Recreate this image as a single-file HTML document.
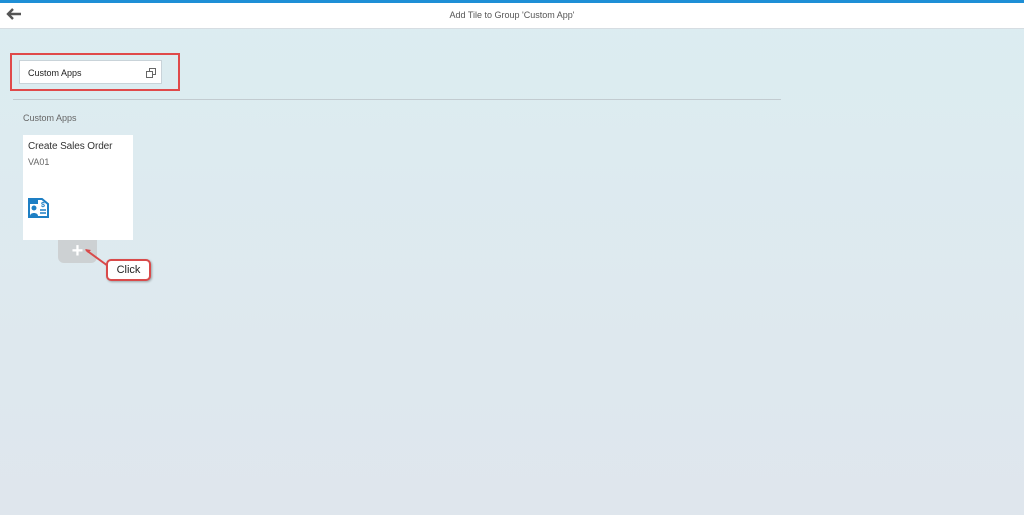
<!DOCTYPE html>
<html><head><style>
body{margin:0;width:1024px;height:515px;overflow:hidden;font-family:"Liberation Sans",sans-serif;background:linear-gradient(#dcedf1,#dfe6ed);position:relative}
.top{position:absolute;left:0;top:0;width:1024px;height:3px;background:#1e8fd6}
.hdr{position:absolute;left:0;top:3px;width:1024px;height:25px;background:#fff;border-bottom:1px solid #d6dde2}
.title{position:absolute;width:1024px;text-align:center;font-size:9px;color:#555}
.red{position:absolute;left:10px;top:53px;width:170px;height:38px;border:2px solid #e04a4a;box-sizing:border-box}
.inp{position:absolute;left:19px;top:60px;width:143px;height:24px;background:#fff;border:1px solid #c9d3d9;box-sizing:border-box;font-size:9px;color:#222;padding:7px 0 0 8px}
.line{position:absolute;left:13px;top:99px;width:768px;height:1px;background:#c2cbd0}
.lbl{position:absolute;left:23px;top:113px;font-size:9px;color:#666}
.tile{position:absolute;left:23px;top:135px;width:110px;height:105px;background:#fff}
.plus{position:absolute;left:58px;top:240px;width:39px;height:23px;background:#cdd1d3;border-radius:0 0 6px 6px;color:#fff;font-size:20px;text-align:center;line-height:23px;font-weight:bold}
.click{position:absolute;left:106px;top:259px;width:45px;height:22px;background:#fff;border:2px solid #d94a4a;border-radius:5px;box-sizing:border-box;font-size:11px;text-align:center;line-height:18px;color:#222;box-shadow:1px 1px 2px rgba(0,0,0,.3)}
</style></head><body>
<div class="top"></div>
<div class="hdr"><svg style="position:absolute;left:6px;top:5px" width="16" height="12" viewBox="0 0 16 12"><path d="M7 1L2 6l5 5M2 6h13" stroke="#555" stroke-width="2.4" fill="none"/></svg><div class="title" style="top:7px">Add Tile to Group 'Custom App'</div></div>
<div class="red"></div>
<div class="inp">Custom Apps<svg style="position:absolute;left:126px;top:7px" width="10" height="10" viewBox="0 0 10 10"><rect x="0.5" y="3.5" width="6" height="6" fill="none" stroke="#666"/><path d="M3.5 3V.5h6v6H7" fill="none" stroke="#666"/></svg></div>
<div class="line"></div>
<div class="lbl">Custom Apps</div>
<div class="tile"><div style="position:absolute;left:5px;top:6px;font-size:10px;color:#333;letter-spacing:-0.1px">Create Sales Order</div><div style="position:absolute;left:5px;top:22px;font-size:9px;color:#666">VA01</div>
<svg style="position:absolute;left:5px;top:63px" width="21" height="20" viewBox="0 0 21 20"><path d="M1 1h13l6 5v13H1z" fill="#fff" stroke="#1e7fc4" stroke-width="2"/><rect x="1" y="1" width="9" height="5" fill="#1e7fc4"/><circle cx="6" cy="10" r="2.5" fill="#1e7fc4"/><path d="M2 18c0-4 8-4 8 0z" fill="#1e7fc4"/><text x="13" y="9" font-size="7" fill="#1e7fc4" font-family="Liberation Sans" font-weight="bold">$</text><path d="M12 12h6M12 15h6" stroke="#1e7fc4" stroke-width="1.5"/></svg></div>
<div class="plus">+</div>
<svg style="position:absolute;left:84px;top:248px" width="30" height="22"><path d="M2 2L24 18" stroke="#d94a4a" stroke-width="2"/><path d="M1 1l6 1-3 3z" fill="#d94a4a"/></svg>
<div class="click">Click</div>
</body></html>
